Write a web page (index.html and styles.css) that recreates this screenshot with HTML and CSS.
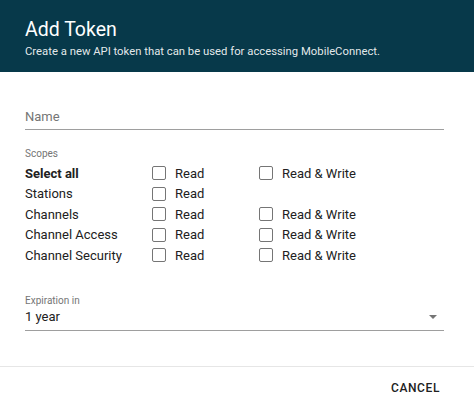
FILE: index.html
```html
<!DOCTYPE html>
<html lang="en">
<head>
<meta charset="utf-8">
<title>Add Token</title>
<link rel="stylesheet" href="styles.css">
</head>
<body>
<div class="dialog">
  <header class="dlg-header">
    <h1 class="dlg-title">Add Token</h1>
    <p class="dlg-subtitle">Create a new API token that can be used for accessing MobileConnect.</p>
  </header>
  <div class="dlg-body">
    <div class="text-field">
      <span class="placeholder">Name</span>
    </div>
    <div class="scopes">
      <div class="small-label">Scopes</div>
      <div class="scope-grid">
        <div class="scope-name strong">Select all</div>
        <label class="check"><span class="box"></span>Read</label>
        <label class="check"><span class="box"></span>Read &amp; Write</label>

        <div class="scope-name">Stations</div>
        <label class="check"><span class="box"></span>Read</label>
        <div></div>

        <div class="scope-name">Channels</div>
        <label class="check"><span class="box"></span>Read</label>
        <label class="check"><span class="box"></span>Read &amp; Write</label>

        <div class="scope-name">Channel Access</div>
        <label class="check"><span class="box"></span>Read</label>
        <label class="check"><span class="box"></span>Read &amp; Write</label>

        <div class="scope-name">Channel Security</div>
        <label class="check"><span class="box"></span>Read</label>
        <label class="check"><span class="box"></span>Read &amp; Write</label>
      </div>
    </div>
    <div class="select-field">
      <div class="small-label">Expiration in</div>
      <div class="select-value">
        <span>1 year</span>
        <svg class="arrow" width="8" height="4" viewBox="0 0 8 4"><path d="M0 0L4 4L8 0Z" fill="#757575"/></svg>
      </div>
    </div>
  </div>
  <div class="dlg-actions">
    <button class="btn-text">CANCEL</button>
  </div>
</div>
</body>
</html>
```
FILE: styles.css
```css
* { box-sizing: border-box; }
html, body { margin: 0; padding: 0; background: #fff; }
body {
  font-family: Roboto, "Noto Sans", "Liberation Sans", sans-serif;
  color: #212121;
  width: 474px;
  height: 406px;
  overflow: hidden;
}
.dialog { width: 474px; }
.dlg-header {
  background: #07394a;
  color: #fff;
  height: 72px;
  padding: 18px 25px 0;
}
.dlg-title {
  margin: 0;
  font-size: 19.5px;
  line-height: 24px;
  font-weight: 400;
}
.dlg-subtitle {
  margin: 2px 0 0;
  font-size: 11.3px;
  line-height: 16px;
  color: rgba(255,255,255,0.9);
}
.dlg-body {
  padding: 35px 30px 0 25px;
}
.text-field {
  font-size: 13px;
  line-height: 20px;
  padding-bottom: 2px;
  border-bottom: 1px solid #9e9e9e;
}
.placeholder { color: #757575; }
.scopes { margin-top: 18px; }
.small-label {
  font-size: 10px;
  line-height: 12px;
  color: #757575;
}
.scope-grid {
  margin-top: 3px;
  display: grid;
  grid-template-columns: 127px 107px 1fr;
  grid-auto-rows: 20.5px;
  align-items: center;
  font-size: 13px;
}
.scope-name { color: #212121; }
.strong { font-weight: 700; }
.check {
  display: flex;
  align-items: center;
  gap: 9px;
  color: #212121;
}
.box {
  width: 14px;
  height: 14px;
  border: 1.5px solid #757575;
  border-radius: 2px;
  flex: none;
}
.select-field { margin-top: 29px; }
.select-value {
  display: flex;
  align-items: center;
  justify-content: space-between;
  font-size: 13px;
  line-height: 20px;
  padding: 0 7px 3.4px 0;
  border-bottom: 1px solid #9e9e9e;
}
.arrow { display: block; }
.dlg-actions {
  margin-top: 35px;
  border-top: 1px solid #e6e6e6;
  display: flex;
  justify-content: flex-end;
  padding: 9px 26px 0 0;
}
.btn-text {
  background: none;
  border: 0;
  font-family: inherit;
  font-size: 12px;
  font-weight: 500;
  letter-spacing: 0.6px;
  color: #212121;
  padding: 4px 8px;
  line-height: 16px;
}
```
